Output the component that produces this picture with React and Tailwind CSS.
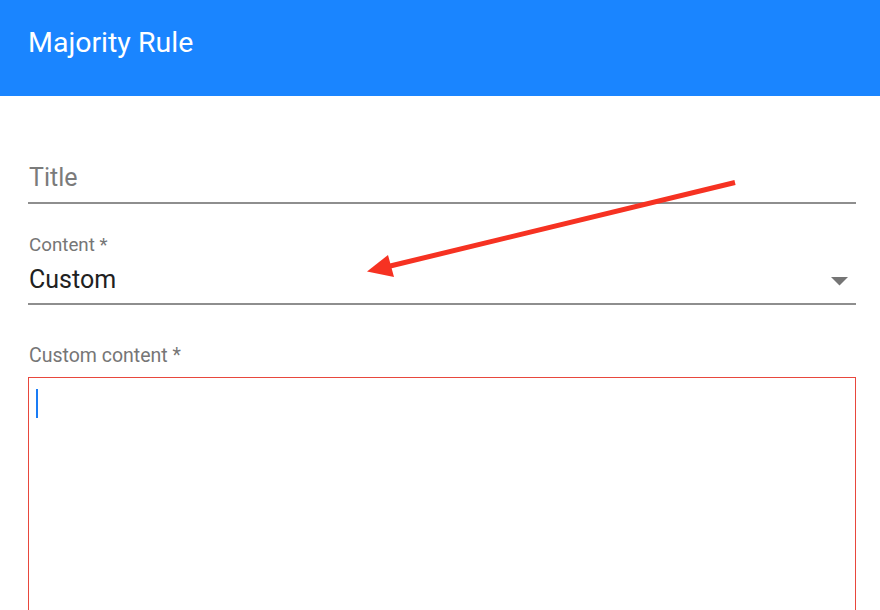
import React from "react";

export default function App() {
  return (
    <div className="relative w-[880px] h-[610px] overflow-hidden bg-white" style={{ fontFamily: "Roboto, 'Noto Sans', sans-serif" }}>
      <header className="h-[96px] bg-[#1a85ff] pl-[28px] pt-[26px]">
        <h1 className="text-white text-[28.5px] leading-[33px] font-normal">Majority Rule</h1>
      </header>

      <main className="pl-[28px] pr-[24px]">
        {/* Title field */}
        <div className="mt-[67px] border-b-2 border-[#8e8e8e] pb-[9px]">
          <div className="text-[25px] leading-[30px] text-[#7b7b7b] pl-[1px]">Title</div>
        </div>

        {/* Content select */}
        <div className="mt-[30px]">
          <div className="text-[18.75px] leading-[22px] text-[#767676] pl-[1px]">Content *</div>
          <div className="mt-[9px] flex items-center justify-between border-b-2 border-[#8e8e8e] pb-[8px]">
            <div className="text-[25px] leading-[30px] text-[#212121] pl-[1px]">Custom</div>
            <svg width="17" height="9" viewBox="0 0 17 9" className="mr-[8px] mt-[2px]">
              <polygon points="0,0 17,0 8.5,8.5" fill="#757575" />
            </svg>
          </div>
        </div>

        {/* Custom content */}
        <div className="mt-[39px]">
          <div className="text-[19.5px] leading-[23px] text-[#767676] pl-[1px]">Custom content *</div>
          <div className="mt-[10px] h-[260px] border border-[#e8473d] pl-[7px] pt-[11px]">
            <div className="w-[2px] h-[29px] bg-[#1a7cf5]" />
          </div>
        </div>
      </main>

      {/* annotation arrow */}
      <svg className="absolute left-0 top-0 pointer-events-none" width="880" height="610" viewBox="0 0 880 610">
        <line x1="735" y1="182.5" x2="384" y2="267.5" stroke="#f63222" strokeWidth="5" />
        <polygon points="367,271.5 388,255 394,277" fill="#f63222" />
      </svg>
    </div>
  );
}
